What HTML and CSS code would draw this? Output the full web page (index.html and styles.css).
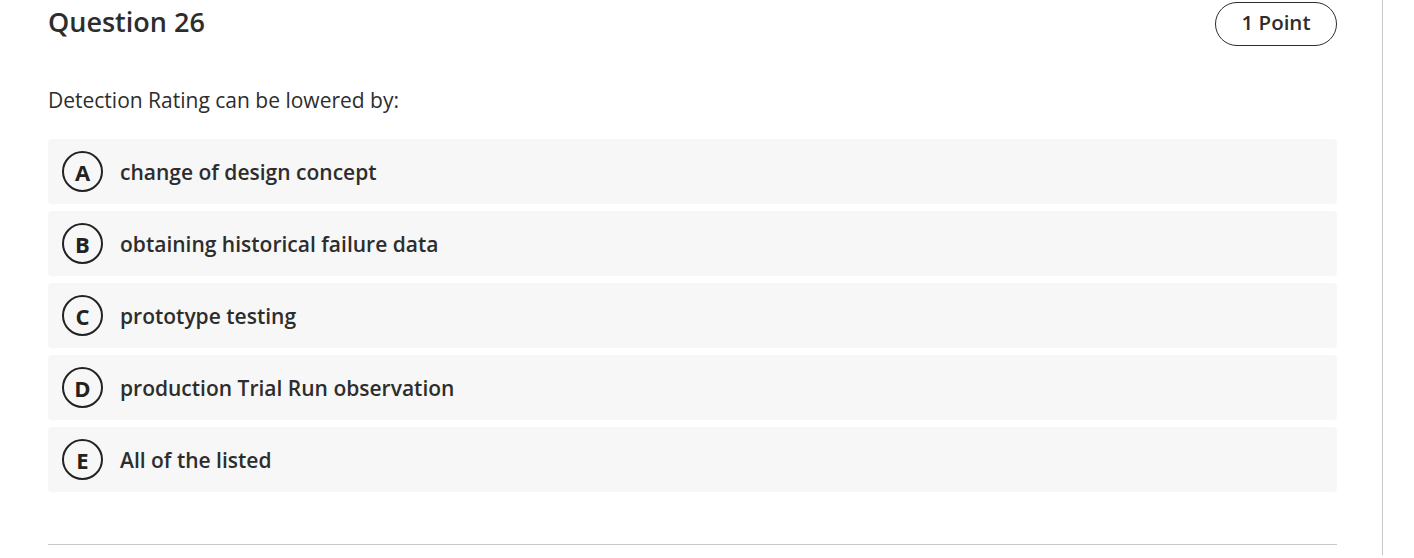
FILE: index.html
```html
<!DOCTYPE html>
<html>
<head>
<meta charset="utf-8">
<link rel="stylesheet" href="styles.css">
</head>
<body>
<div class="page">
  <div class="main">
    <div class="header">
      <h2 class="title">Question 26</h2>
      <span class="points">1 Point</span>
    </div>
    <p class="prompt">Detection Rating can be lowered by:</p>
    <div class="options">
      <div class="option"><span class="letter">A</span><span class="label">change of design concept</span></div>
      <div class="option"><span class="letter">B</span><span class="label">obtaining historical failure data</span></div>
      <div class="option"><span class="letter">C</span><span class="label">prototype testing</span></div>
      <div class="option"><span class="letter">D</span><span class="label">production Trial Run observation</span></div>
      <div class="option"><span class="letter">E</span><span class="label">All of the listed</span></div>
    </div>
    <div class="rule"></div>
  </div>
  <div class="side"></div>
</div>
</body>
</html>
```
FILE: styles.css
```css
html, body {
  margin: 0;
  padding: 0;
  background: #fff;
}
body {
  font-family: "Open Sans", "Liberation Sans", sans-serif;
  color: #2d2d2d;
}
.page {
  display: flex;
  height: 558px;
}
.main {
  width: 1289px;
  margin-left: 48px;
}
.side {
  margin-left: 45px;
  width: 1px;
  height: 555px;
  background: #c8c8c8;
}
.header {
  display: flex;
  justify-content: space-between;
  align-items: flex-start;
  height: 46px;
}
.title {
  margin: 4px 0 0 0;
  font-size: 27px;
  font-weight: 600;
  line-height: 36px;
  color: #2d2d2d;
}
.points {
  margin-top: 2px;
  box-sizing: border-box;
  height: 44px;
  width: 122px;
  padding-bottom: 4px;
  border: 1px solid #2d2d2d;
  border-radius: 22px;
  display: flex;
  align-items: center;
  justify-content: center;
  font-size: 20.5px;
  font-weight: 600;
  color: #2d2d2d;
}
.prompt {
  margin: 40px 0 0 0;
  font-size: 21px;
  line-height: 28px;
  color: #2d2d2d;
}
.options {
  margin-top: 25px;
  display: flex;
  flex-direction: column;
  gap: 7px;
}
.option {
  height: 65px;
  background: #f7f7f7;
  border-radius: 4px;
  display: flex;
  align-items: center;
  padding-left: 14px;
}
.letter {
  box-sizing: border-box;
  width: 41px;
  height: 41px;
  border: 2.5px solid #222;
  border-radius: 50%;
  display: flex;
  align-items: center;
  justify-content: center;
  font-size: 22px;
  font-weight: 700;
  color: #222;
}
.label {
  margin-left: 17px;
  font-size: 21px;
  font-weight: 600;
  color: #2d2d2d;
}
.rule {
  margin-top: 52px;
  height: 1px;
  background: #c8c8c8;
}
```
